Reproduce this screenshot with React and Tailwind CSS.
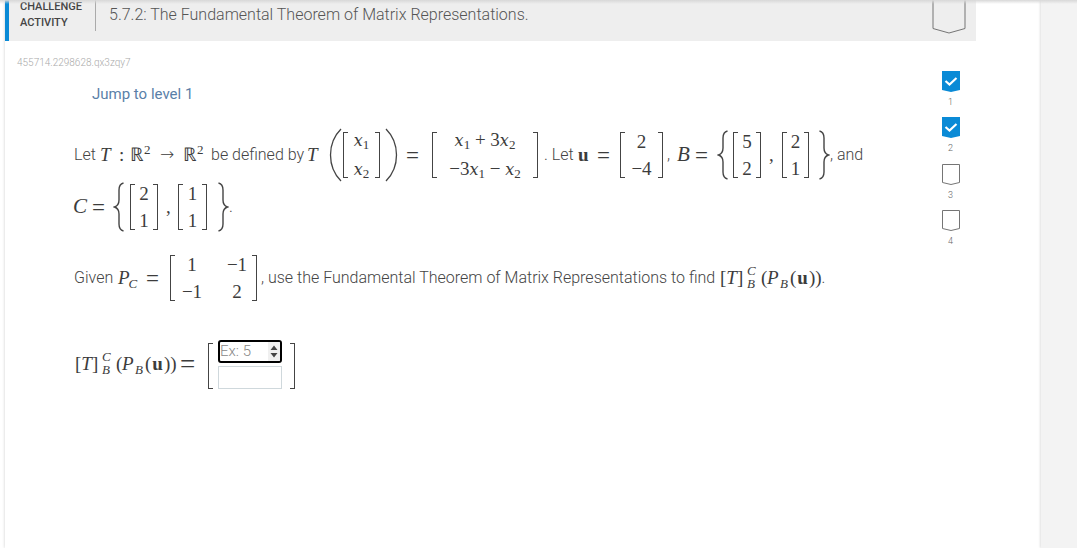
import React from "react";

const math = "font-['Liberation_Serif',serif] text-[19px] text-[#3c3c3c]";
const I = ({ children }) => <i className="italic">{children}</i>;
const X = () => <i className="font-['DejaVu_Serif',serif] italic text-[16px]">x</i>;
const Sub = ({ children }) => (
  <span className="text-[13px] relative top-[3px]">{children}</span>
);
const Eq = ({ cls = "" }) => (
  <span className={`font-['Liberation_Serif',serif] leading-none text-[#3c3c3c] ${cls}`}>=</span>
);
const Cal = ({ children, small }) => (
  <i className={`font-['Liberation_Serif',serif] italic ${small ? "text-[13px] leading-[13px]" : "text-[21px]"}`}>{children}</i>
);

function Bracket({ right }) {
  return (
    <span
      className={`block w-[5px] h-[46px] border-y border-[#444] ${right ? "border-r" : "border-l"}`}
    />
  );
}

function Matrix({ rows, grid = "grid-cols-1", width }) {
  return (
    <span className={`inline-flex items-center ${math}`}>
      <Bracket />
      <span className={`grid ${grid} ${width} h-[46px] content-center justify-items-center leading-[27px]`}>
        {rows.flat().map((c, i) => (
          <span key={i} className="whitespace-nowrap">{c}</span>
        ))}
      </span>
      <Bracket right />
    </span>
  );
}

function Brace({ right }) {
  return (
    <svg width="12" height="50" viewBox="0 0 12 50" className={right ? "-scale-x-100" : ""}>
      <path d="M10.500 1C6.500 2 6 4.500 6 8v10c0 3.500-1.500 6-4.500 7C4.500 26 6 28.500 6 32v10c0 3.500.5 6 4.500 7" fill="none" stroke="#444" strokeWidth="1.400" />
    </svg>
  );
}

function Paren({ right }) {
  return (
    <svg width="14" height="54" viewBox="0 0 14 54" className={right ? "-scale-x-100" : ""}>
      <path d="M13 1C6 8 2.500 16 2.500 27S6 46 13 53" fill="none" stroke="#444" strokeWidth="1.300" />
    </svg>
  );
}

function Txb() {
  return (
    <span className={`inline-flex items-center whitespace-nowrap ${math}`}>
      <span className="w-[27px]">[<I>T</I>]</span>
      <span className="flex flex-col w-[14px] relative -top-[1px]">
        <Cal small>C</Cal>
        <Cal small>B</Cal>
      </span>
      <span className="w-[5px]">(</span>
      <span className="ml-[1px] w-[13px]"><I>P</I></span>
      <span className="w-[10px] relative top-[4px]"><Cal small>B</Cal></span>
      <span>(<b className="mx-[1px] font-bold">u</b>))</span>
    </span>
  );
}

function Pin({ checked, label, cls = "" }) {
  return (
    <div className={`flex flex-col items-center h-[46px] ${cls}`}>
      {checked ? (
        <svg width="18" height="21" viewBox="0 0 18 21">
          <path d="M0 0h18v19l-9 2-9-2z" fill="#0a8ad6" />
          <path d="M3.500 10l4 3.500 7-6.500" fill="none" stroke="#fff" strokeWidth="2.200" />
        </svg>
      ) : (
        <svg width="18" height="21" viewBox="0 0 18 21">
          <path d="M.5.500h17v18l-8.500 2-8.500-2z" fill="#fff" stroke="#757575" />
        </svg>
      )}
      <span className="mt-[5px] text-[9px] leading-[10px] text-[#666] font-['Roboto',sans-serif]">{label}</span>
    </div>
  );
}

export default function App() {
  return (
    <div className="relative flex w-[1077px] h-[548px] overflow-hidden bg-white font-['Roboto',sans-serif] text-[16px] font-light text-[#444]">
      <div className="absolute inset-x-0 top-0 h-[4px] bg-gradient-to-b from-[#d8d8d8] to-transparent z-10" />
      <div className="ml-[5px] w-[971px] h-full flex flex-col shadow-[0_0_3px_rgba(0,0,0,0.2)] bg-white shrink-0">
        <div className="h-[41px] shrink-0 bg-[#eeeeee] border-l-[4px] border-[#0a8ad6] flex items-start">
          <div className="w-[87px] shrink-0 pl-[11px] text-[11px] font-medium leading-[15.500px] text-[#444] -mt-[1px]">
            <div>CHALLENGE</div>
            <div>ACTIVITY</div>
          </div>
          <div className="w-px h-[31px] bg-[#aaa] -ml-[1px]" />
          <div className="ml-[13px] text-[16px] leading-[30px] font-light text-[#555] whitespace-nowrap">
            5.7.2: The Fundamental Theorem of Matrix Representations.
          </div>
          <svg width="34" height="34" viewBox="0 0 34 34" className="ml-auto mr-[10px]">
            <path d="M1 0v28.500l16 4.500 16-4.500V0" fill="none" stroke="#757575" />
          </svg>
        </div>

        <div className="flex flex-1">
          <div className="flex-1">
            <div className="pl-[12px] pt-[16px] text-[10px] leading-[12px] text-[#aaa]">455714.2298628.qx3zqy7</div>
            <div className="pl-[87px] pt-[15px] text-[15px] leading-[20px] font-normal text-[#5a7fa8]">Jump to level 1</div>

            <div className="pl-[69px] pt-[24px]">
              <div className="flex items-center h-[54px] whitespace-nowrap">
                <span className="w-[26px]">Let</span>
                <span className={`${math} w-[19px]`}><I>T</I></span>
                <span className={`${math} w-[11px]`}>:</span>
                <span className={`${math} w-[30px]`}>ℝ<sup className="text-[13px]">2</sup></span>
                <span className="font-['DejaVu_Sans',sans-serif] text-[17px] text-[#3c3c3c] w-[23px]">→</span>
                <span className={`${math} w-[28px]`}>ℝ<sup className="text-[13px]">2</sup></span>
                <span className="w-[96px]">be defined by</span>
                <span className={`${math} w-[21px]`}><I>T</I></span>
                <Paren />
                <span className="ml-[1px]" />
                <Matrix width="w-[27px]" rows={[[<span><X /><Sub>1</Sub></span>], [<span><X /><Sub>2</Sub></span>]]} />
                <span className="ml-[5px]" />
                <Paren right />
                <Eq cls="ml-[7px] w-[14px] text-[23px]" />
                <span className="ml-[12px]" />
                <Matrix width="w-[96px]" rows={[[<span><X /><Sub>1</Sub> + 3<X /><Sub>2</Sub></span>], [<span>−3<X /><Sub>1</Sub> − <X /><Sub>2</Sub></span>]]} />
                <span className="w-[40px] pl-[6px]">. Let</span>
                <b className={`${math} font-bold w-[19px]`}>u</b>
                <Eq cls="w-[23px] text-[23px]" />
                <Matrix width="w-[33px]" rows={[["2"], ["−4"]]} />
                <span className="w-[14px] pl-[4px]">,</span>
                <span className={`${math} w-[18px]`}><Cal>B</Cal></span>
                <Eq cls="w-[22px] text-[23px]" />
                <Brace />
                <span className="ml-[4px]" />
                <Matrix width="w-[18px]" rows={[["5"], ["2"]]} />
                <span className={`${math} w-[21px] pl-[8px]`}>,</span>
                <Matrix width="w-[17px]" rows={[["2"], ["1"]]} />
                <span className="ml-[9px]" />
                <Brace right />
                <span>, and</span>
              </div>

              <div className="flex items-center h-[48px] mt-[1px] whitespace-nowrap">
                <span className={`${math} w-[18px] -ml-[1px] mr-[1px]`}><Cal>C</Cal></span>
                <Eq cls="w-[21px] text-[23px]" />
                <Brace />
                <span className="ml-[5px]" />
                <Matrix width="w-[18px]" rows={[["2"], ["1"]]} />
                <span className={`${math} w-[20px] pl-[8px]`}>,</span>
                <Matrix width="w-[19px]" rows={[["1"], ["1"]]} />
                <span className="ml-[10px]" />
                <Brace right />
                <span>.</span>
              </div>

              <div className="flex items-center h-[54px] mt-[20px] whitespace-nowrap">
                <span className="w-[44px]">Given</span>
                <span className={`${math} w-[28px]`}><I>P</I><span className="relative top-[4px] -ml-[1px]"><Cal small>C</Cal></span></span>
                <Eq cls="w-[24px] text-[23px]" />
                <Matrix grid="grid-cols-[34px_30px] gap-x-[13px]" width="w-[77px]" rows={[["1", "−1"], ["−1", "2"]]} />
                <span className="ml-[4px] w-[459px]">, use the Fundamental Theorem of Matrix Representations to find</span>
                <Txb />
                <span>.</span>
              </div>

              <div className="flex items-center h-[54px] mt-[32px] whitespace-nowrap">
                <span className="w-[106px] pl-[1px]"><Txb /></span>
                <Eq cls="w-[28px] text-[27px]" />
                <span className="mt-[3px]"><Bracket /></span>
                <div className="flex flex-col gap-[3px] ml-[5px] mr-[8px] w-[64px]">
                  <div className="h-[23px] flex items-center border-2 border-black rounded-[3px] bg-white overflow-hidden">
                    <input
                      readOnly
                      placeholder="Ex: 5"
                      className="w-[44px] min-w-0 text-[15px] font-light outline-none placeholder:text-[#888] bg-transparent"
                    />
                    <svg width="12" height="19" viewBox="0 0 12 19" className="ml-auto bg-[#f0f0f0]">
                      <path d="M6 3.500l3.500 4.500h-7zM6 15.500l-3.500-4.500h7z" fill="#444" />
                    </svg>
                  </div>
                  <input readOnly className="h-[23px] w-full border border-[#cfd8dc] bg-white outline-none" />
                </div>
                <span className="mt-[3px]"><Bracket right /></span>
              </div>
            </div>
          </div>

          <div className="w-[37px] shrink-0 mr-[7px] pt-[30px] flex flex-col items-center">
            <Pin checked label="1" />
            <Pin checked label="2" />
            <Pin label="3" cls="mt-[1px]" />
            <Pin label="4" />
          </div>
        </div>
      </div>
      <div className="w-[65px] shrink-0 h-full bg-white" />
      <div className="flex-1 h-full bg-[#f3f3f3] shadow-[-1px_0_2px_rgba(0,0,0,0.12)]" />
    </div>
  );
}
